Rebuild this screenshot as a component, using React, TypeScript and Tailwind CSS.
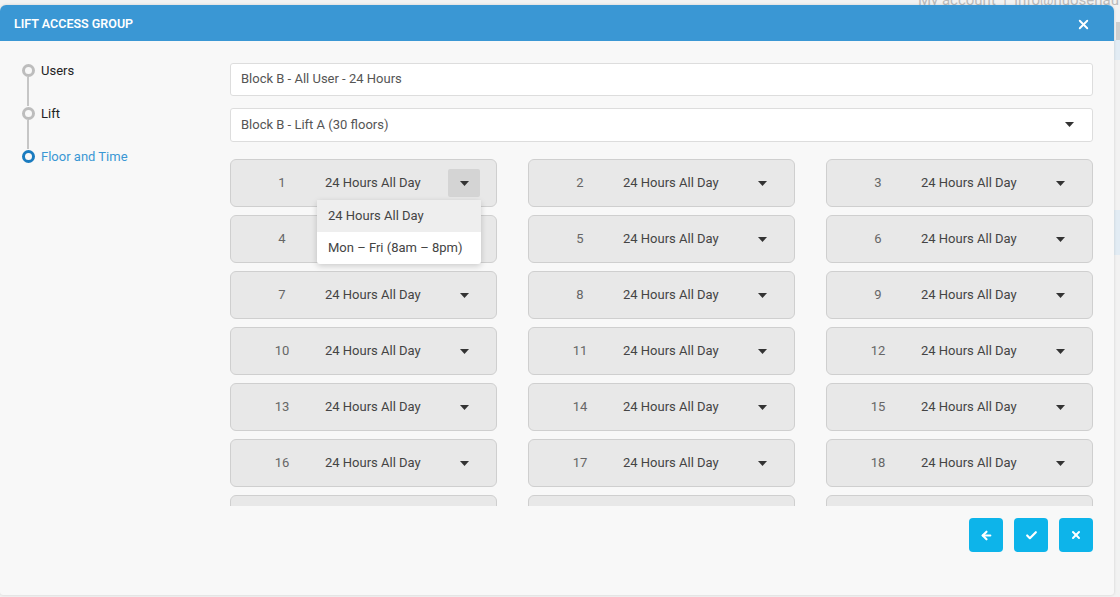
import { ArrowLeft, Check, X } from 'lucide-react'

const FONT = { fontFamily: 'Roboto, "Noto Sans", sans-serif' }

function Caret({ className = '' }: { className?: string }) {
  return (
    <svg width="9" height="5" viewBox="0 0 9 5" className={className}>
      <path d="M0 0 L9 0 L4.5 5 Z" fill="#333" />
    </svg>
  )
}

function Step({ label, active, last }: { label: string; active?: boolean; last?: boolean }) {
  return (
    <div className="flex gap-[6px]">
      <div className="flex flex-col items-center w-[14px]">
        <div
          className={
            'w-[13px] h-[13px] rounded-full border-[3px] mt-[1px] shrink-0 ' +
            (active ? 'border-[#1a7bbf]' : 'border-[#bdbdbd]')
          }
        />
        {!last && <div className="w-[2px] h-[29px] bg-[#c6c6c6]" />}
      </div>
      <span className={'text-[13px] leading-[15px] ' + (active ? 'text-[#3a97d4]' : 'text-[#222]')}>{label}</span>
    </div>
  )
}

function FloorCell({ n, open }: { n: number; open?: boolean }) {
  return (
    <div className="relative h-[48px] rounded-[6px] border border-[#cfcfcf] bg-[#e8e8e8] flex items-center">
      <span className="w-[94px] pl-[8px] text-center text-[13px] text-[#666]">{n}</span>
      <span className="text-[13px] text-[#444]">24 Hours All Day</span>
      <div
        className={
          'ml-auto mr-[16px] w-[32px] h-[28px] rounded-[2px] flex items-center justify-center ' +
          (open ? 'bg-[#d4d4d4]' : '')
        }
      >
        <Caret />
      </div>
      {open && (
        <div className="absolute left-[86px] top-[40px] z-10 w-[164px] bg-white rounded-[3px] shadow-[0_2px_6px_rgba(0,0,0,0.18)] text-[13px] text-[#444]">
          <div className="h-[32px] flex items-center px-[11px] bg-[#eeeeee]">24 Hours All Day</div>
          <div className="h-[32px] flex items-center px-[11px]">Mon – Fri (8am – 8pm)</div>
        </div>
      )}
    </div>
  )
}

export default function App() {
  const floors = Array.from({ length: 21 }, (_, i) => i + 1)

  return (
    <div className="relative w-[1120px] h-[597px] bg-[#f2f2f2] overflow-hidden" style={FONT}>
      {/* page behind the modal */}
      <div className="absolute left-[918px] top-[-11px] text-[15px] text-[#bbb] whitespace-nowrap">
        My account &nbsp;|&nbsp; info@nuosenauto.com
      </div>
      <div className="absolute right-0 top-[22px] w-[4px] h-[30px] bg-[#cfcfcf]" />
      <div className="absolute right-0 top-[40px] w-[6px] h-[20px] bg-[#e2ecf4]" />
      <div className="absolute right-0 top-[210px] w-[6px] h-[45px] bg-[#e2ecf4]" />

      {/* modal */}
      <div className="absolute left-0 top-[5px] w-[1114px] h-[590px] rounded-t-[6px] rounded-b-[3px] bg-[#f8f8f8] shadow-[0_0_3px_rgba(0,0,0,0.15)] flex flex-col overflow-hidden">
        <div className="h-[36px] shrink-0 bg-[#3a97d4] flex items-center px-[14px] pt-[2px]">
          <span className="text-white text-[12.5px] font-semibold">LIFT ACCESS GROUP</span>
          <X className="ml-auto mr-[9px] text-white" size={15} strokeWidth={3} />
        </div>

        <div className="flex flex-1">
          <div className="w-[230px] shrink-0 pl-[21px] pt-[22px] flex flex-col">
            <Step label="Users" />
            <Step label="Lift" />
            <Step label="Floor and Time" active last />
          </div>

          <div className="w-[863px] pt-[22px] flex flex-col">
            <div className="h-[33px] bg-white border border-[#dddddd] rounded-[3px] flex items-center px-[10px] pb-[2px] text-[13px] text-[#555]">
              Block B - All User - 24 Hours
            </div>
            <div className="mt-[12px] h-[34px] bg-white border border-[#dddddd] rounded-[3px] flex items-center px-[10px] pb-[1px] text-[13px] text-[#555]">
              Block B - Lift A (30 floors)
              <Caret className="ml-auto mr-[8px]" />
            </div>

            <div className="mt-[17px] h-[347px] overflow-hidden">
              <div className="grid grid-cols-3 gap-x-[31px] gap-y-[8px]">
                {floors.map(n => (
                  <FloorCell key={n} n={n} open={n === 1} />
                ))}
              </div>
            </div>

            <div className="mt-[12px] flex justify-end gap-[11px]">
              <button className="w-[34px] h-[34px] rounded-[4px] bg-[#0db4ea] flex items-center justify-center">
                <ArrowLeft size={13} strokeWidth={4} className="text-white" />
              </button>
              <button className="w-[34px] h-[34px] rounded-[4px] bg-[#0db4ea] flex items-center justify-center">
                <Check size={13} strokeWidth={4} className="text-white" />
              </button>
              <button className="w-[34px] h-[34px] rounded-[4px] bg-[#0db4ea] flex items-center justify-center">
                <X size={12} strokeWidth={4} className="text-white" />
              </button>
            </div>
          </div>
        </div>
      </div>
    </div>
  )
}
